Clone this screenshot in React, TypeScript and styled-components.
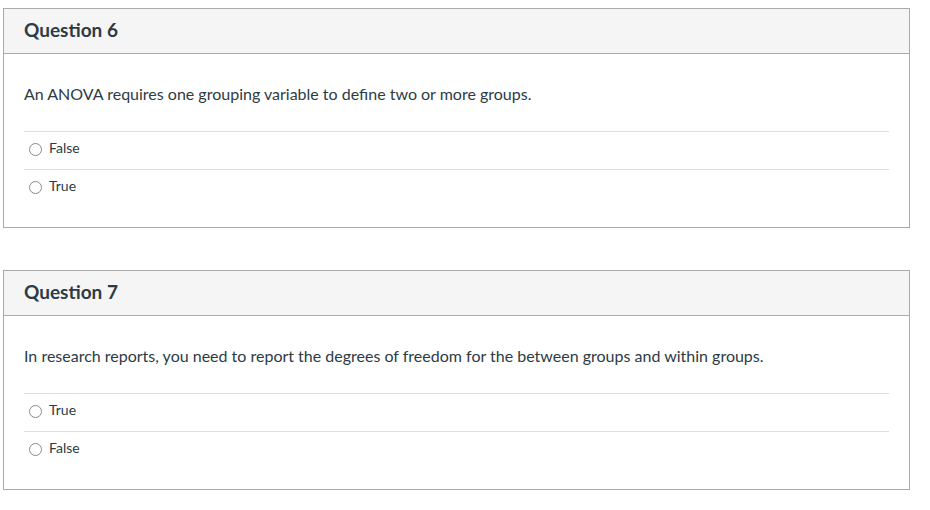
import * as React from 'react';
import styled, { createGlobalStyle } from 'styled-components';

const GlobalStyle = createGlobalStyle`
    body {
        margin: 0;
        background: #fff;
        font-family: Lato, "Liberation Sans", sans-serif;
        color: #2d3b45;
    }
`;

const Page = styled.div`
    display: flex;
    flex-direction: column;
    gap: 42px;
    padding: 8px 20px 20px 3px;
`;

const Card = styled.div`
    border: 1px solid #aaaaaa;
    background: #fff;
`;

const Header = styled.div`
    display: flex;
    align-items: center;
    height: 45px;
    padding: 0 20px 3px;
    box-sizing: border-box;
    background: #f5f5f5;
    border-bottom: 1px solid #aaaaaa;
`;

const Title = styled.h2`
    margin: 0;
    font-size: 19px;
    font-weight: 700;
    color: #2d3b45;
`;

const Body = styled.div`
    padding: 28px 20px 20px;
`;

const QuestionText = styled.p`
    margin: 0 0 26px;
    font-size: 16px;
    line-height: 23px;
`;

const Option = styled.label`
    display: flex;
    align-items: center;
    gap: 7px;
    height: 37px;
    padding-left: 5px;
    border-top: 1px solid #dddddd;
    font-size: 14px;
    line-height: 18px;
    color: #2d3b45;
`;

const OptionText = styled.span`
    margin-top: -5px;
`;

const Radio = styled.span`
    width: 11px;
    height: 11px;
    margin-top: -2px;
    border: 1px solid #8a8a8a;
    border-radius: 50%;
    background: #fff;
`;

interface IQuestionProps {
    num: number;
    text: string;
    options: string[];
}

const Question = ({ num, text, options }: IQuestionProps) => (
    <Card>
        <Header>
            <Title>Question {num}</Title>
        </Header>
        <Body>
            <QuestionText>{text}</QuestionText>
            {options.map(o => (
                <Option key={o}>
                    <Radio />
                    <OptionText>{o}</OptionText>
                </Option>
            ))}
        </Body>
    </Card>
);

export default function App() {
    return (
        <Page>
            <GlobalStyle />
            <Question
                num={6}
                text="An ANOVA requires one grouping variable to define two or more groups."
                options={['False', 'True']}
            />
            <Question
                num={7}
                text="In research reports, you need to report the degrees of freedom for the between groups and within groups."
                options={['True', 'False']}
            />
        </Page>
    );
}
